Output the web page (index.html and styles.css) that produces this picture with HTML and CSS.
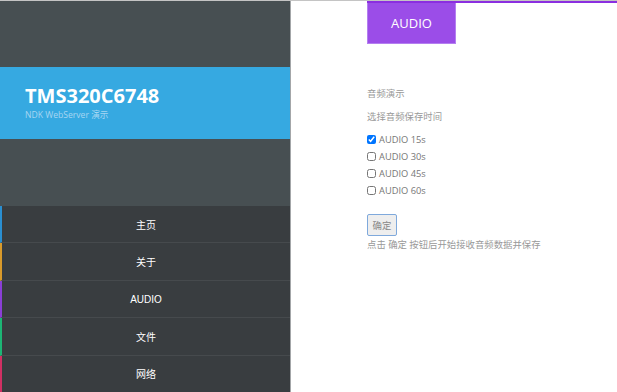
FILE: index.html
```
<!DOCTYPE html>
<html>
<head>
<meta charset="utf-8">
<link rel="stylesheet" href="styles.css">
</head>
<body>
<div class="page">
  <aside class="sidebar">
    <div class="side-top"></div>
    <div class="brand">
      <div class="brand-title">TMS320C6748</div>
      <div class="brand-sub">NDK WebServer 演示</div>
    </div>
    <div class="side-gap"></div>
    <nav class="nav">
      <a class="nav-item c-blue">主页</a>
      <a class="nav-item c-orange">关于</a>
      <a class="nav-item c-purple">AUDIO</a>
      <a class="nav-item c-green">文件</a>
      <a class="nav-item c-red">网络</a>
    </nav>
  </aside>
  <main class="main">
    <div class="tabbar">
      <div class="tab">AUDIO</div>
    </div>
    <div class="content">
      <p class="line">音频演示</p>
      <p class="line last">选择音频保存时间</p>
      <div class="opts">
        <label class="opt"><input type="checkbox" checked> AUDIO 15s</label>
        <label class="opt"><input type="checkbox"> AUDIO 30s</label>
        <label class="opt"><input type="checkbox"> AUDIO 45s</label>
        <label class="opt"><input type="checkbox"> AUDIO 60s</label>
      </div>
      <button class="btn">确定</button>
      <p class="hint">点击 确定 按钮后开始接收音频数据并保存</p>
    </div>
  </main>
</div>
</body>
</html>
```
FILE: styles.css
```
html, body {
  margin: 0;
  padding: 0;
  height: 100%;
  background: #fff;
}
body {
  font-family: "Open Sans", "Noto Sans CJK SC", sans-serif;
  border-top: 1px solid #c4c4c4;
  box-sizing: border-box;
  overflow: hidden;
}
.page {
  display: flex;
  height: 391px;
}
.sidebar {
  width: 290px;
  flex: none;
  display: flex;
  flex-direction: column;
  background: #474f52;
  border-right: 1px solid #a3a6a8;
}
.side-top {
  height: 66px;
}
.brand {
  height: 72px;
  background: #36a9e1;
  box-sizing: border-box;
  padding: 17px 0 0 25px;
}
.brand-title {
  color: #fff;
  font-weight: 700;
  font-size: 20px;
  line-height: 24px;
}
.brand-sub {
  color: #a6d6f2;
  font-size: 8.6px;
  line-height: 12px;
  margin-top: 1px;
}
.side-gap {
  height: 67px;
}
.nav {
  flex: 1;
  display: flex;
  flex-direction: column;
  background: #393d40;
}
.nav-item {
  flex: 1;
  display: flex;
  align-items: center;
  justify-content: center;
  color: #fff;
  font-family: "Liberation Sans", "Noto Sans CJK SC", sans-serif;
  font-size: 10px;
  border-left: 2px solid;
  border-bottom: 1px solid #464a4d;
}
.nav-item:last-child { border-bottom: 0; }
.c-blue { border-left-color: #2a8fd1; }
.c-orange { border-left-color: #d99a2b; }
.c-purple { border-left-color: #8a3fd6; }
.c-green { border-left-color: #1db575; }
.c-red { border-left-color: #d03063; }
.main {
  flex: 1;
  padding-left: 76px;
}
.tabbar {
  border-top: 2px solid #8b2ee0;
}
.tab {
  width: 89px;
  height: 41px;
  box-sizing: border-box;
  background: #9b4de8;
  border: 1px solid #b47ff0;
  border-top: 0;
  color: #fff;
  font-size: 13px;
  display: flex;
  align-items: center;
  justify-content: center;
}
.content {
  padding-top: 43px;
  color: #999;
  font-size: 9.4px;
}
.line {
  margin: 0 0 10px;
  line-height: 13px;
}
.line.last {
  margin-bottom: 0;
}
.opts {
  margin-top: 8px;
  display: flex;
  flex-direction: column;
}
.opt {
  display: flex;
  align-items: center;
  height: 17px;
  color: #777;
  font-size: 9.3px;
}
.opt input {
  width: 9px;
  height: 9px;
  margin: 0 3px 0 0;
}
.btn {
  margin-top: 15px;
  width: 30px;
  height: 22px;
  padding: 0;
  font-family: "Noto Sans CJK SC", sans-serif;
  font-size: 9.4px;
  color: #888;
  background: #eeeeee;
  border: 1px solid #7fa9dc;
  border-radius: 2px;
}
.hint {
  margin: 2px 0 0;
  line-height: 14px;
}
```
